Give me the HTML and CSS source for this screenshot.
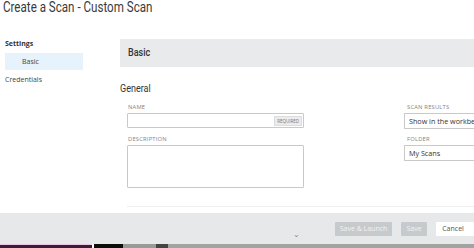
FILE: index.html
```html
<!DOCTYPE html>
<html>
<head>
<meta charset="utf-8">
<link rel="stylesheet" href="styles.css">
</head>
<body>
<div class="page">
  <header class="top">
    <h1 class="title"><span class="cond">Create a Scan - Custom Scan</span></h1>
  </header>
  <div class="main">
    <nav class="side">
      <div class="side-head">Settings</div>
      <div class="side-item active">Basic</div>
      <div class="side-item top-level">Credentials</div>
    </nav>
    <section class="content">
      <div class="panel-head"><span class="cond">Basic</span></div>
      <h2 class="section-title"><span class="cond">General</span></h2>
      <div class="form">
        <div class="col col-left">
          <label class="lbl">Name</label>
          <div class="input">
            <span class="req">Required</span>
          </div>
          <label class="lbl lbl-gap">Description</label>
          <div class="textarea"></div>
        </div>
        <div class="col col-right">
          <label class="lbl">Scan Results</label>
          <div class="select">Show in the workbench</div>
          <label class="lbl lbl-gap">Folder</label>
          <div class="select">My Scans</div>
        </div>
      </div>
      <div class="divider"></div>
    </section>
  </div>
  <footer class="actions">
    <span class="chev">&#8964;</span>
    <button class="btn btn-dis btn-launch">Save &amp; Launch</button>
    <button class="btn btn-dis btn-save">Save</button>
    <button class="btn btn-cancel">Cancel</button>
  </footer>
  <div class="taskbar">
    <span class="seg seg-purple"></span>
    <span class="seg seg-black"></span>
    <span class="seg seg-grey1"></span>
    <span class="seg seg-dark"></span>
    <span class="seg seg-grey2"></span>
  </div>
</div>
</body>
</html>
```

FILE: styles.css
```css
* { box-sizing: border-box; }
html, body { margin: 0; padding: 0; }
body {
  width: 474px;
  height: 248px;
  overflow: hidden;
  background: #fff;
  font-family: "Open Sans", "Liberation Sans", sans-serif;
  color: #333;
}
.page {
  display: flex;
  flex-direction: column;
  height: 248px;
}
.cond {
  display: inline-block;
  transform-origin: left center;
  white-space: nowrap;
}
.top {
  height: 39px;
  padding-left: 3px;
  flex: none;
}
.title {
  margin: 0;
  font-family: "Roboto", "Liberation Sans", sans-serif;
  font-weight: normal;
  font-size: 14.5px;
  line-height: 16px;
  color: #3a3a3a;
}
.title .cond { transform: scaleX(0.8); }
.main {
  flex: 1;
  display: flex;
  min-height: 0;
}
.side {
  width: 120px;
  flex: none;
  padding: 0 37px 0 5px;
}
.side-head {
  font-size: 7px;
  font-weight: bold;
  color: #333;
  line-height: 10px;
  margin-top: 0;
}
.side-item {
  font-size: 7px;
  line-height: 16px;
  color: #444;
}
.side-item.active {
  margin-top: 4px;
  background: #e6f3fd;
  padding-left: 17px;
  height: 17px;
  line-height: 17px;
}
.side-item.top-level {
  margin-top: 2px;
}
.content {
  flex: 1;
  min-width: 0;
  display: flex;
  flex-direction: column;
}
.panel-head {
  height: 28px;
  background: #e9eaec;
  padding-left: 8px;
  font-family: "Roboto", "Liberation Sans", sans-serif;
  font-weight: 500;
  font-size: 11px;
  line-height: 28px;
  color: #333;
}
.panel-head .cond { transform: scaleX(0.82); }
.section-title {
  margin: 15px 0 0 0;
  font-family: "Roboto", "Liberation Sans", sans-serif;
  font-weight: normal;
  font-size: 11px;
  line-height: 14px;
  color: #333;
}
.section-title .cond { transform: scaleX(0.82); }
.form {
  display: flex;
  padding-left: 7px;
  margin-top: 7px;
}
.col-left {
  width: 177px;
  flex: none;
}
.col-right {
  margin-left: 100px;
  flex: 1;
}
.lbl {
  display: block;
  font-size: 5.8px;
  line-height: 8px;
  text-transform: uppercase;
  color: #858585;
  letter-spacing: 0.2px;
  padding-left: 1px;
  margin-bottom: 2px;
}
.lbl-gap { margin-top: 7px; }
.input {
  height: 15px;
  border: 1px solid #c9c9c9;
  border-radius: 1px;
  display: flex;
  align-items: center;
  justify-content: flex-end;
  padding-right: 1px;
}
.req {
  font-size: 4.5px;
  text-transform: uppercase;
  background: #ececef;
  border: 1px solid #dcdcdf;
  color: #777;
  height: 10px;
  line-height: 8px;
  padding: 0 2px;
}
.textarea {
  height: 43px;
  border: 1px solid #c9c9c9;
  border-radius: 1px;
}
.col-right .lbl { padding-left: 3px; }
.select {
  height: 16px;
  border: 1px solid #c9c9c9;
  border-right: none;
  border-radius: 1px 0 0 1px;
  font-size: 7.2px;
  line-height: 14px;
  padding-left: 4px;
  color: #333;
  white-space: nowrap;
  overflow: hidden;
}
.col-right .lbl-gap { margin-top: 6px; }
.divider {
  margin-top: auto;
  margin-left: 7px;
  margin-bottom: 6px;
  height: 1px;
  background: #eeeeee;
}
.actions {
  height: 31px;
  flex: none;
  background: #e7e8ea;
  display: flex;
  align-items: center;
  padding-top: 1px;
}
.chev {
  margin-left: 293px;
  font-size: 8px;
  color: #888;
  align-self: flex-end;
  line-height: 8px;
  margin-bottom: 6px;
}
.btn {
  font-family: "Open Sans", "Liberation Sans", sans-serif;
  font-size: 7px;
  height: 14px;
  border: none;
  padding: 0;
  border-radius: 1px;
  line-height: 14px;
}
.btn-dis {
  background: #c7cacd;
  color: #f2f2f2;
}
.btn-launch {
  width: 61px;
  margin-left: 35px;
}
.btn-save {
  width: 28px;
  margin-left: 9px;
}
.btn-cancel {
  width: 40px;
  margin-left: 9px;
  background: #fff;
  color: #555;
  text-align: left;
  padding-left: 6px;
}
.taskbar {
  height: 4px;
  flex: none;
  display: flex;
}
.seg { display: block; height: 4px; }
.seg-purple { width: 92px; background: #3c1b3b; border-top: 1px solid #e9c9df; }
.seg-black { width: 29px; margin-left: 2px; background: #0c0c0c; }
.seg-grey1 { width: 33px; background: #9a9a9a; }
.seg-dark { width: 12px; background: #444; }
.seg-grey2 { flex: 1; background: #a3a3a3; }
```
